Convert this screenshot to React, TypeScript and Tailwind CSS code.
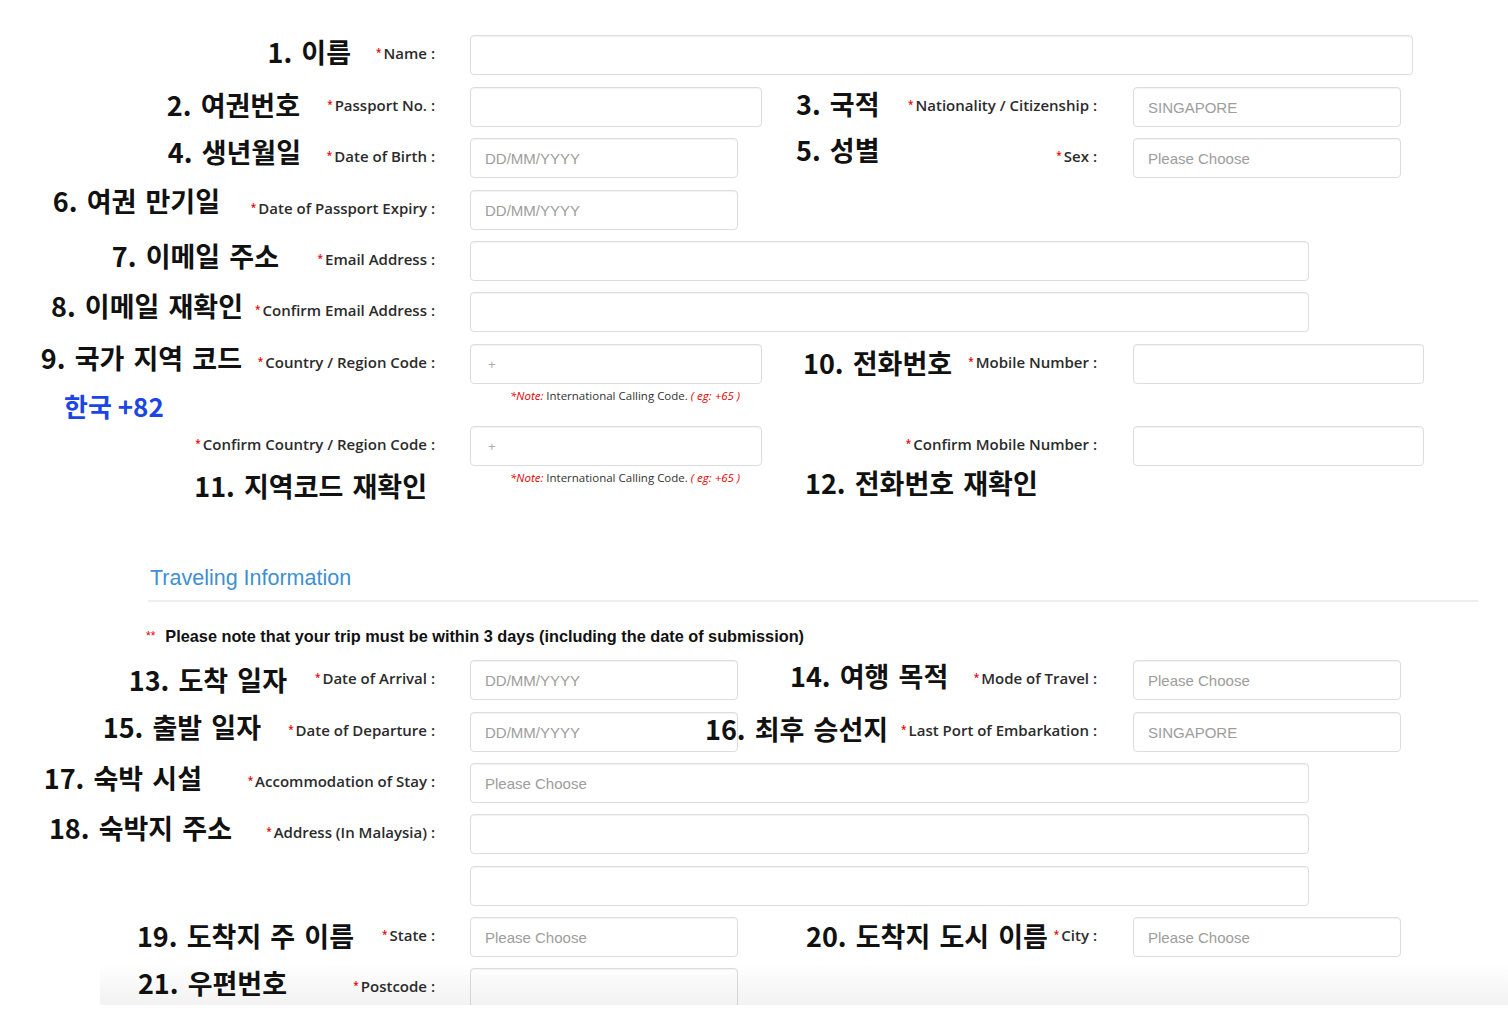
import React from 'react'

const KOR =
  "font-['Noto_Sans_CJK_KR','Noto_Sans',sans-serif] font-bold text-[27px] leading-none text-[#111] whitespace-nowrap [word-spacing:3px]"
const EN =
  "font-['Open_Sans','Liberation_Sans',sans-serif] font-semibold text-[15px] leading-5 text-[#2b2b2b] whitespace-nowrap"

function Req() {
  return <span className="mr-[2px] inline-block -translate-y-[3px] text-[10px] leading-none text-[#e30000]">*</span>
}

function Field({ w, placeholder, plus }: { w: string; placeholder?: string; plus?: boolean }) {
  return (
    <input
      readOnly
      placeholder={placeholder}
      className={`h-10 ${w} shrink-0 rounded-[4px] border border-[#dddddd] bg-white font-['Liberation_Sans',sans-serif] text-[#999] shadow-[inset_0_1px_1px_rgba(0,0,0,0.05)] outline-none placeholder:text-[#9d9d9d] ${
        plus ? 'pl-[17px] text-[13px] placeholder:text-[#aaa]' : 'px-[14px] text-[15px]'
      }`}
    />
  )
}

function LeftLabel({ kor, korBox, en }: { kor?: string; korBox?: string; en: string }) {
  return (
    <div className="grid w-[470px] shrink-0 pr-[35px]">
      {kor && (
        <div className={`col-start-1 row-start-1 self-center justify-self-start text-right ${KOR} ${korBox}`}>
          {kor}
        </div>
      )}
      <div className={`col-start-1 row-start-1 justify-self-end pt-2 ${EN}`}>
        <Req />
        {en} :
      </div>
    </div>
  )
}

function RightLabel({ kor, korBox, en }: { kor?: string; korBox?: string; en: string }) {
  return (
    <div className="grid w-[371px] shrink-0 pr-[36px]">
      {kor && (
        <div className={`col-start-1 row-start-1 self-center justify-self-start ${KOR} ${korBox}`}>{kor}</div>
      )}
      <div className={`col-start-1 row-start-1 justify-self-end pt-2 ${EN}`}>
        <Req />
        {en} :
      </div>
    </div>
  )
}

function Note() {
  return (
    <div className="font-['Open_Sans','Liberation_Sans',sans-serif] text-[11.5px] leading-3 whitespace-nowrap text-[#333]">
      <span className="italic text-[#e30000]">*Note:</span> International Calling Code.{' '}
      <span className="italic text-[#e30000]">( eg: +65 )</span>
    </div>
  )
}

export default function App() {
  return (
    <div className="min-h-[1024px] bg-white">
      <div className="relative h-[1005px] overflow-hidden pt-[35px]">
        {/* personal */}
        <div className="flex h-10">
          <LeftLabel kor="1. 이름" korBox="w-[351px] -translate-y-[4.5px]" en="Name" />
          <Field w="w-[943px]" />
        </div>

        <div className="mt-[12px] flex h-10">
          <LeftLabel kor="2. 여권번호" korBox="w-[300px] -translate-y-[3.5px]" en="Passport No." />
          <div className="w-[292px] shrink-0">
            <Field w="w-[292px]" />
          </div>
          <RightLabel kor="3. 국적" korBox="ml-[34px] -translate-y-[4.5px]" en="Nationality / Citizenship" />
          <Field w="w-[268px]" placeholder="SINGAPORE" />
        </div>

        <div className="mt-[11px] flex h-10">
          <LeftLabel kor="4. 생년월일" korBox="w-[301px] -translate-y-[7.5px]" en="Date of Birth" />
          <div className="w-[292px] shrink-0">
            <Field w="w-[268px]" placeholder="DD/MM/YYYY" />
          </div>
          <RightLabel kor="5. 성별" korBox="ml-[34px] -translate-y-[9.5px]" en="Sex" />
          <Field w="w-[268px]" placeholder="Please Choose" />
        </div>

        <div className="mt-[12px] flex h-10">
          <LeftLabel kor="6. 여권 만기일" korBox="w-[220px] -translate-y-[10.5px]" en="Date of Passport Expiry" />
          <Field w="w-[268px]" placeholder="DD/MM/YYYY" />
        </div>

        <div className="mt-[11px] flex h-10">
          <LeftLabel kor="7. 이메일 주소" korBox="w-[279px] -translate-y-[6.5px]" en="Email Address" />
          <Field w="w-[839px]" />
        </div>

        <div className="mt-[11px] flex h-10">
          <LeftLabel kor="8. 이메일 재확인" korBox="w-[243px] -translate-y-[7.5px]" en="Confirm Email Address" />
          <Field w="w-[839px]" />
        </div>

        <div className="mt-[12px] flex h-10">
          <LeftLabel kor="9. 국가 지역 코드" korBox="w-[242px] -translate-y-[7.5px]" en="Country / Region Code" />
          <div className="w-[292px] shrink-0">
            <Field w="w-[292px]" placeholder="+" plus />
          </div>
          <RightLabel kor="10. 전화번호" korBox="ml-[41px] -translate-y-[2.5px]" en="Mobile Number" />
          <Field w="w-[291px]" />
        </div>

        <div className="flex h-[42px]">
          <div className="w-[470px] shrink-0 pl-[64px] pt-[9px]">
            <span className="font-['Noto_Sans_CJK_KR','Noto_Sans',sans-serif] text-[26px] leading-none font-bold text-[#1b45e4]">
              한국 +82
            </span>
          </div>
          <div className="w-[292px] shrink-0 pl-[40px] pt-[6px]">
            <Note />
          </div>
        </div>

        <div className="flex h-10">
          <LeftLabel en="Confirm Country / Region Code" />
          <div className="w-[292px] shrink-0">
            <Field w="w-[292px]" placeholder="+" plus />
          </div>
          <RightLabel en="Confirm Mobile Number" />
          <Field w="w-[291px]" />
        </div>

        <div className="flex h-10">
          <div className="w-[470px] shrink-0 pt-[6px]">
            <div className={`w-[427px] text-right ${KOR}`}>11. 지역코드 재확인</div>
          </div>
          <div className="w-[292px] shrink-0 pl-[40px] pt-[6px]">
            <Note />
          </div>
          <div className="pl-[43px] pt-[3px]">
            <div className={KOR}>12. 전화번호 재확인</div>
          </div>
        </div>

        {/* traveling */}
        <h2 className="mt-[57px] ml-[150px] font-['Liberation_Sans',sans-serif] text-[21.5px] leading-[30px] font-normal text-[#3f8fd2]">
          Traveling Information
        </h2>
        <div className="mt-[7px] ml-[148px] h-[2px] w-[1330px] bg-[#eeeeee]" />

        <div className="mt-[24px] ml-[146px] flex items-center gap-[10px] font-['Liberation_Sans',sans-serif] leading-5">
          <span className="text-[12px] text-[#e30000]">**</span>
          <span className="text-[16.3px] font-bold text-[#111]">
            Please note that your trip must be within 3 days (including the date of submission)
          </span>
        </div>

        <div className="mt-[14px] flex h-10">
          <LeftLabel kor="13. 도착 일자" korBox="w-[287px] -translate-y-[1.5px]" en="Date of Arrival" />
          <div className="w-[292px] shrink-0">
            <Field w="w-[268px]" placeholder="DD/MM/YYYY" />
          </div>
          <RightLabel kor="14. 여행 목적" korBox="ml-[28px] -translate-y-[5.5px]" en="Mode of Travel" />
          <Field w="w-[268px]" placeholder="Please Choose" />
        </div>

        <div className="mt-[12px] flex h-10">
          <LeftLabel kor="15. 출발 일자" korBox="w-[261px] -translate-y-[6.5px]" en="Date of Departure" />
          <div className="w-[292px] shrink-0">
            <Field w="w-[268px]" placeholder="DD/MM/YYYY" />
          </div>
          <RightLabel kor="16. 최후 승선지" korBox="-ml-[57px] -translate-y-[4.5px]" en="Last Port of Embarkation" />
          <Field w="w-[268px]" placeholder="SINGAPORE" />
        </div>

        <div className="mt-[11px] flex h-10">
          <LeftLabel kor="17. 숙박 시설" korBox="w-[202px] -translate-y-[6.5px]" en="Accommodation of Stay" />
          <Field w="w-[839px]" placeholder="Please Choose" />
        </div>

        <div className="mt-[11px] flex h-10">
          <LeftLabel kor="18. 숙박지 주소" korBox="w-[232px] -translate-y-[7.5px]" en="Address (In Malaysia)" />
          <Field w="w-[839px]" />
        </div>

        <div className="mt-[12px] flex h-10">
          <div className="w-[470px] shrink-0" />
          <Field w="w-[839px]" />
        </div>

        <div className="mt-[11px] flex h-10">
          <LeftLabel kor="19. 도착지 주 이름" korBox="w-[354px] -translate-y-[2.5px]" en="State" />
          <div className="w-[292px] shrink-0">
            <Field w="w-[268px]" placeholder="Please Choose" />
          </div>
          <RightLabel kor="20. 도착지 도시 이름" korBox="ml-[44px] -translate-y-[2.5px]" en="City" />
          <Field w="w-[268px]" placeholder="Please Choose" />
        </div>

        <div className="mt-[11px] flex h-10">
          <LeftLabel kor="21. 우편번호" korBox="w-[287px] -translate-y-[6.5px]" en="Postcode" />
          <Field w="w-[268px]" />
        </div>

        <div className="pointer-events-none absolute right-0 bottom-0 left-[100px] h-[42px] bg-linear-to-b from-transparent to-black/[0.05]" />
      </div>
    </div>
  )
}
